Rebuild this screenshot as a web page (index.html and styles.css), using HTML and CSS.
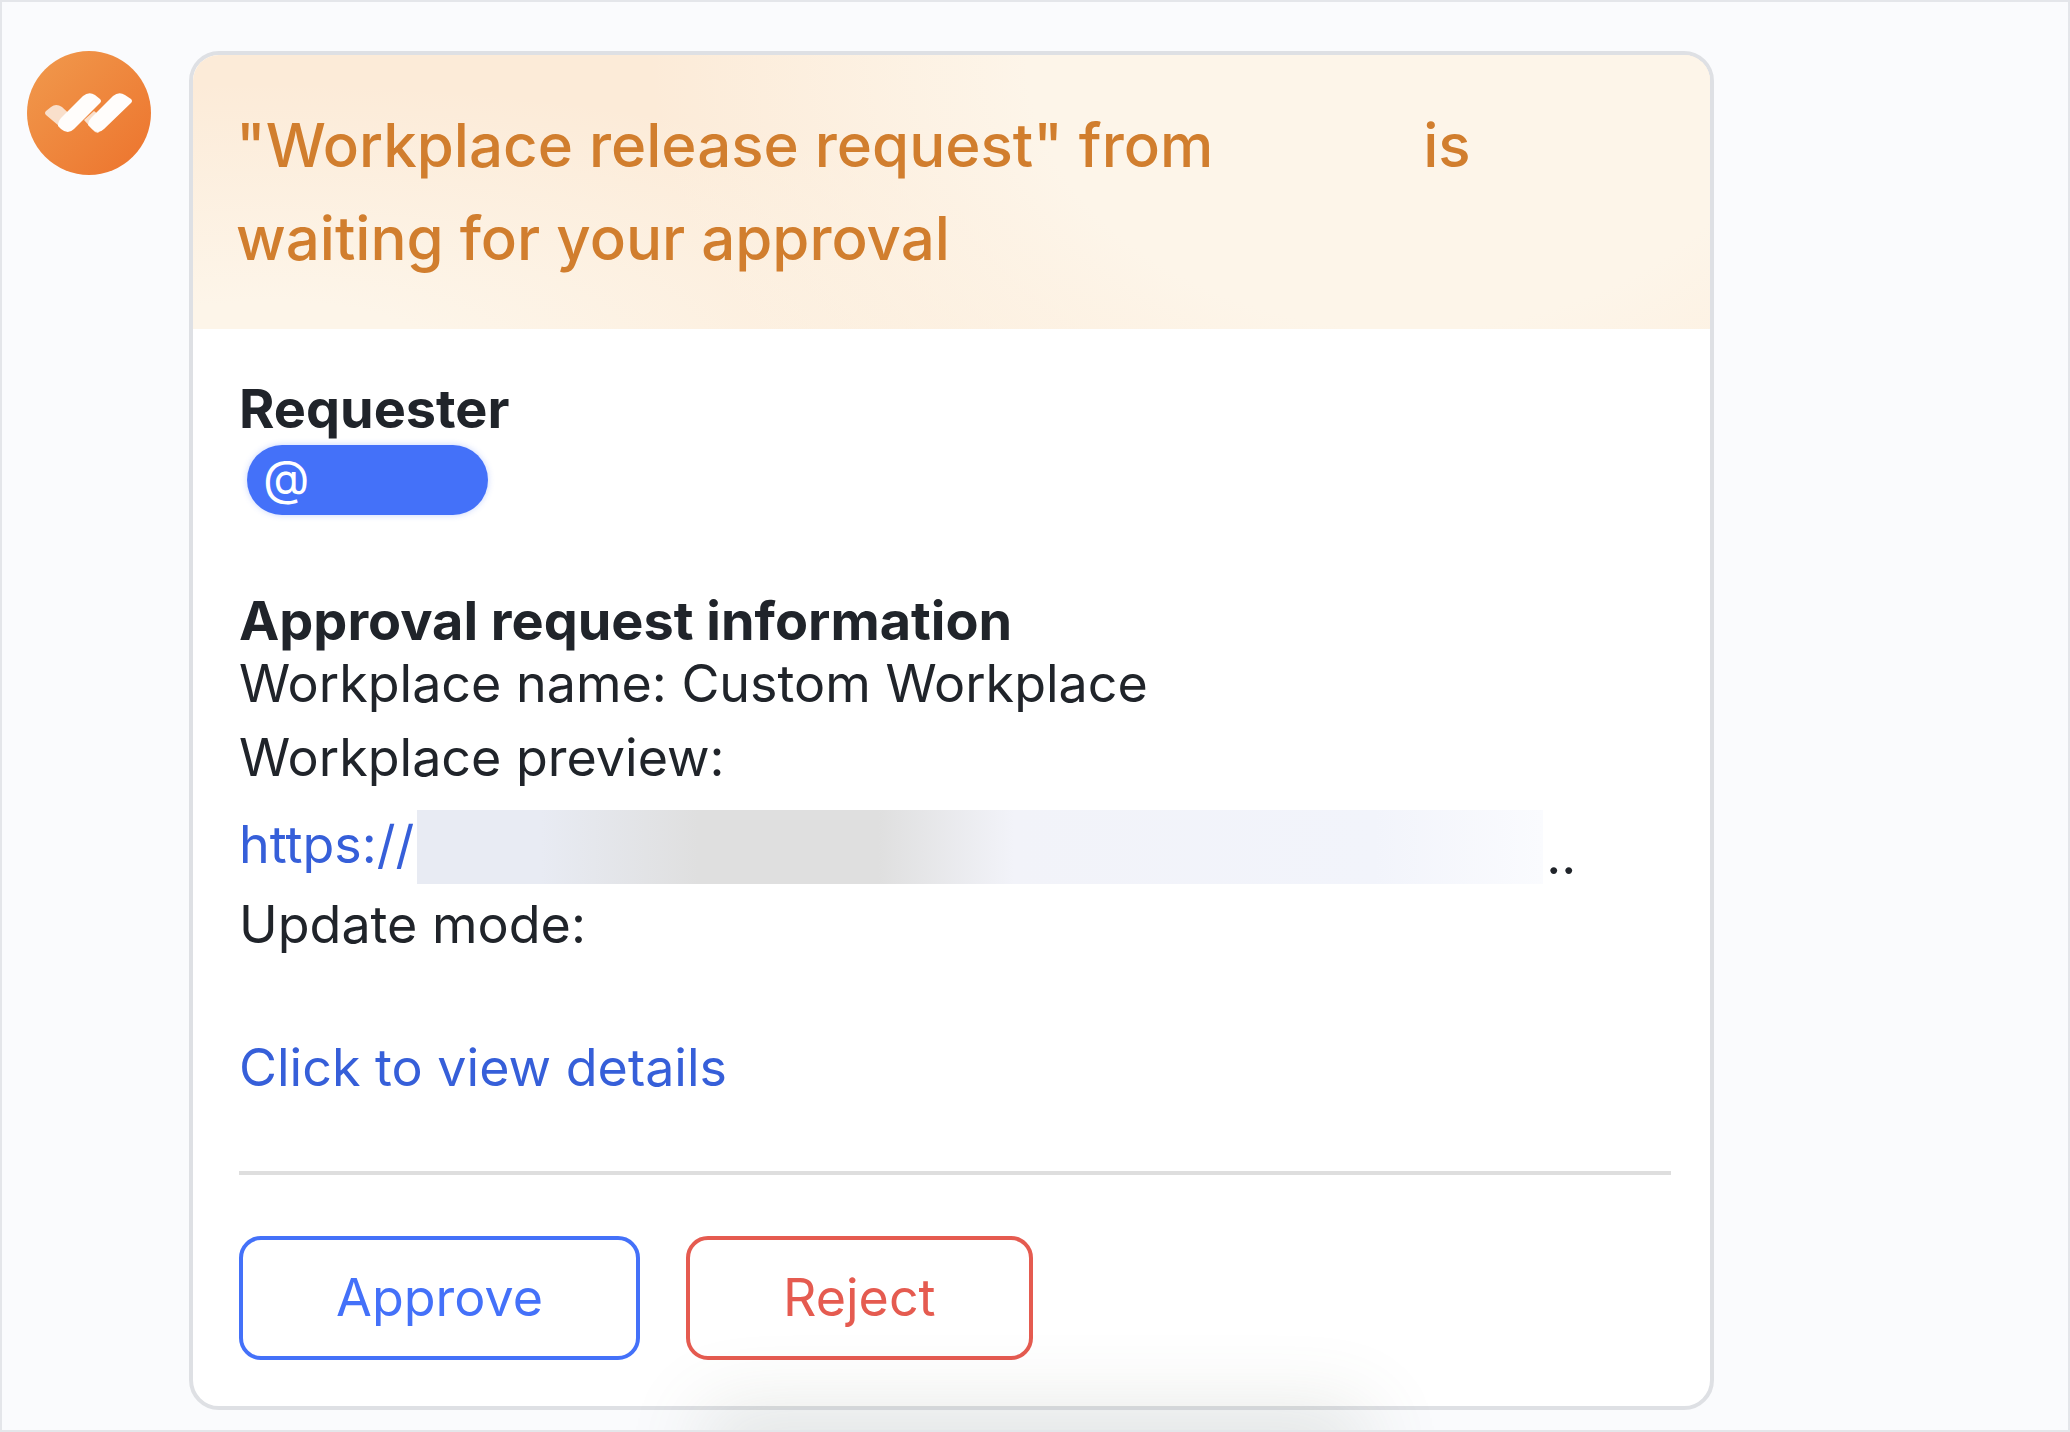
FILE: index.html
```html
<!DOCTYPE html>
<html lang="en">
<head>
    <meta charset="UTF-8">
    <meta name="viewport" content="width=device-width, initial-scale=1.0">
    <title>Approval request</title>
    <link rel="stylesheet" href="styles.css">
</head>
<body>
    <main class="chat">
        <div class="avatar">
            <svg viewBox="0 0 124 124" aria-hidden="true">
                <defs>
                    <linearGradient id="avatar-bg" x1="0" y1="0" x2="1" y2="1">
                        <stop offset="0.1" stop-color="#f0964a"/>
                        <stop offset="0.9" stop-color="#ed7730"/>
                    </linearGradient>
                </defs>
                <circle cx="62" cy="62" r="62" fill="url(#avatar-bg)"/>
                <path d="M19 64 Q17 62 19 60 L24 56 Q29 52 35 56 L49 69 L38 80 Z" fill="#f9dfcb"/>
                <path d="M57 69 L67 60 L81 71 L71 82 Q68 82 66 79 Z" fill="#f9dfcb"/>
                <path d="M34 78 L31 75 Q31 70 34 67 L56 45 Q62 40 68 44 L73 48 Q75 50 73 52 L47 78 Q41 84 34 78 Z" fill="#fffdfb"/>
                <path d="M65 78 L61 74 Q61 70 64 67 L86 45 Q92 40 98 44 L104 48 Q106 50 104 52 L77 78 Q71 84 65 78 Z" fill="#fffdfb"/>
            </svg>
        </div>
        <article class="card">
            <header class="card-header">
                <h1>"Workplace release request" from <span class="name-gap"></span> is waiting for your approval</h1>
            </header>
            <div class="card-body">
                <h2>Requester</h2>
                <span class="mention">@</span>

                <h2>Approval request information</h2>
                <p>Workplace name: Custom Workplace</p>
                <p>Workplace preview:</p>
                <p class="row-url"><a href="#">https://</a><span class="masked"></span><span class="dots">..</span></p>
                <p>Update mode:</p>

                <p class="details"><a href="#">Click to view details</a></p>
                <hr>
                <div class="actions">
                    <button class="btn btn-approve" type="button">Approve</button>
                    <button class="btn btn-reject" type="button">Reject</button>
                </div>
            </div>
        </article>
    </main>
</body>
</html>
```

FILE: styles.css
```css
* {
    box-sizing: border-box;
}
body {
    margin: 0;
    font-family: Inter, "Liberation Sans", sans-serif;
    font-size: 52px;
    line-height: 74px;
    color: #20242a;
    background-color: #fafbfd;
}
h1, h2, p {
    margin: 0;
}
a {
    color: #365fd9;
    text-decoration: none;
}
.chat {
    display: flex;
    align-items: flex-start;
    gap: 38px;
    min-height: 100vh;
    padding: 49px 24px 20px 25px;
    border: 2px solid #e4e6ea;
    position: relative;
    overflow: hidden;
}
/* soft shadow rising from the bottom edge */
.chat::after {
    content: "";
    position: absolute;
    left: 35%;
    right: 35%;
    bottom: -40px;
    height: 40px;
    box-shadow: 0 0 80px 20px rgba(90, 100, 80, 0.16);
    pointer-events: none;
}
.avatar {
    flex: none;
    width: 124px;
    height: 124px;
}
.avatar svg {
    display: block;
}
.card {
    flex: 1;
    max-width: 1525px;
    border: 4px solid #dee0e4;
    border-radius: 30px;
    background-color: #ffffff;
    overflow: hidden;
}
.card-header {
    padding: 44px 43px;
    background: radial-gradient(ellipse 50% 200% at 80% 0%, #fdf5e9 50%, rgba(253, 245, 233, 0) 100%),
        radial-gradient(ellipse 55% 100% at 5% 110%, #fdf5e9 20%, rgba(253, 245, 233, 0) 100%),
        #fcebd8;
}
h1 {
    font-size: 60px;
    line-height: 93px;
    font-weight: 500;
    color: #d17e2e;
}
.name-gap {
    display: inline-block;
    width: 178px;
}
.card-body {
    padding: 54px 39px 46px 46px;
}
h2 {
    font-size: 54px;
    line-height: 52px;
    font-weight: 700;
}
.mention {
    display: block;
    width: 241px;
    height: 70px;
    margin: 10px 8px 80px;
    padding-left: 16px;
    border-radius: 35px;
    font-size: 48px;
    line-height: 66px;
    color: #ffffff;
    background-color: #4471f9;
    box-shadow: 0 0 6px rgba(68, 113, 249, 0.3);
}
.row-url {
    display: flex;
    gap: 3px;
    margin: 15px 0 4px;
    line-height: 70px;
}
.masked {
    width: 1126px;
    height: 74px;
    background: linear-gradient(90deg, #e8ebf3 0%, #e8ebf3 11%, #dfdfdf 25%, #dfdfdf 41%, #f2f3f9 53%, #f2f4fb 85%, #fafbfe 100%);
}
.dots {
    align-self: flex-end;
    line-height: 56px;
}
.details {
    margin-top: 69px;
}
hr {
    margin: 66px 0 61px;
    border: none;
    border-top: 4px solid #dedede;
}
.actions {
    display: flex;
    gap: 46px;
}
.btn {
    padding: 21px 93px;
    border: 4px solid;
    border-radius: 22px;
    font-family: inherit;
    font-size: 52px;
    line-height: 74px;
    background-color: #ffffff;
    cursor: pointer;
}
.btn-approve {
    color: #4471f9;
}
.btn-reject {
    color: #e55b50;
}
```
